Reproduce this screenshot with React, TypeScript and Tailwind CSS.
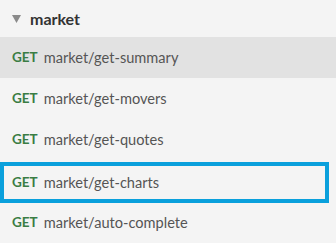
const endpoints = [
  "market/get-summary",
  "market/get-movers",
  "market/get-quotes",
  "market/get-charts",
  "market/auto-complete",
];

function Row({ path, active, focused }: { path: string; active?: boolean; focused?: boolean }) {
  return (
    <div
      className={
        "flex items-center h-[41px] text-[14.6px] " +
        (active ? "bg-[#e2e2e2] " : "") +
        (focused ? "border-4 border-[#0aa0dc] mr-[7px] pl-[8px] mt-[2px] -mb-[1px]" : "pl-[12px]")
      }
    >
      <span className="font-bold text-[13.5px] text-[#3a7d44] mr-[6px]">GET</span>
      <span className="text-[#555555]">{path}</span>
    </div>
  );
}

export default function App() {
  return (
    <div
      className="w-[336px] h-[243px] bg-[#f4f4f4] overflow-hidden"
      style={{ fontFamily: "Lato, 'Open Sans', sans-serif" }}
    >
      <div className="flex items-center h-[37px] pl-[12px]">
        <svg width="9" height="8" viewBox="0 0 9 8" className="mr-[9px] mt-[1px]">
          <polygon points="0,0 9,0 4.5,8" fill="#8a8a8a" />
        </svg>
        <span className="font-bold text-[16px] text-[#333333]">market</span>
      </div>
      {endpoints.map((p, i) => (
        <Row key={p} path={p} active={i === 0} focused={i === 3} />
      ))}
    </div>
  );
}
